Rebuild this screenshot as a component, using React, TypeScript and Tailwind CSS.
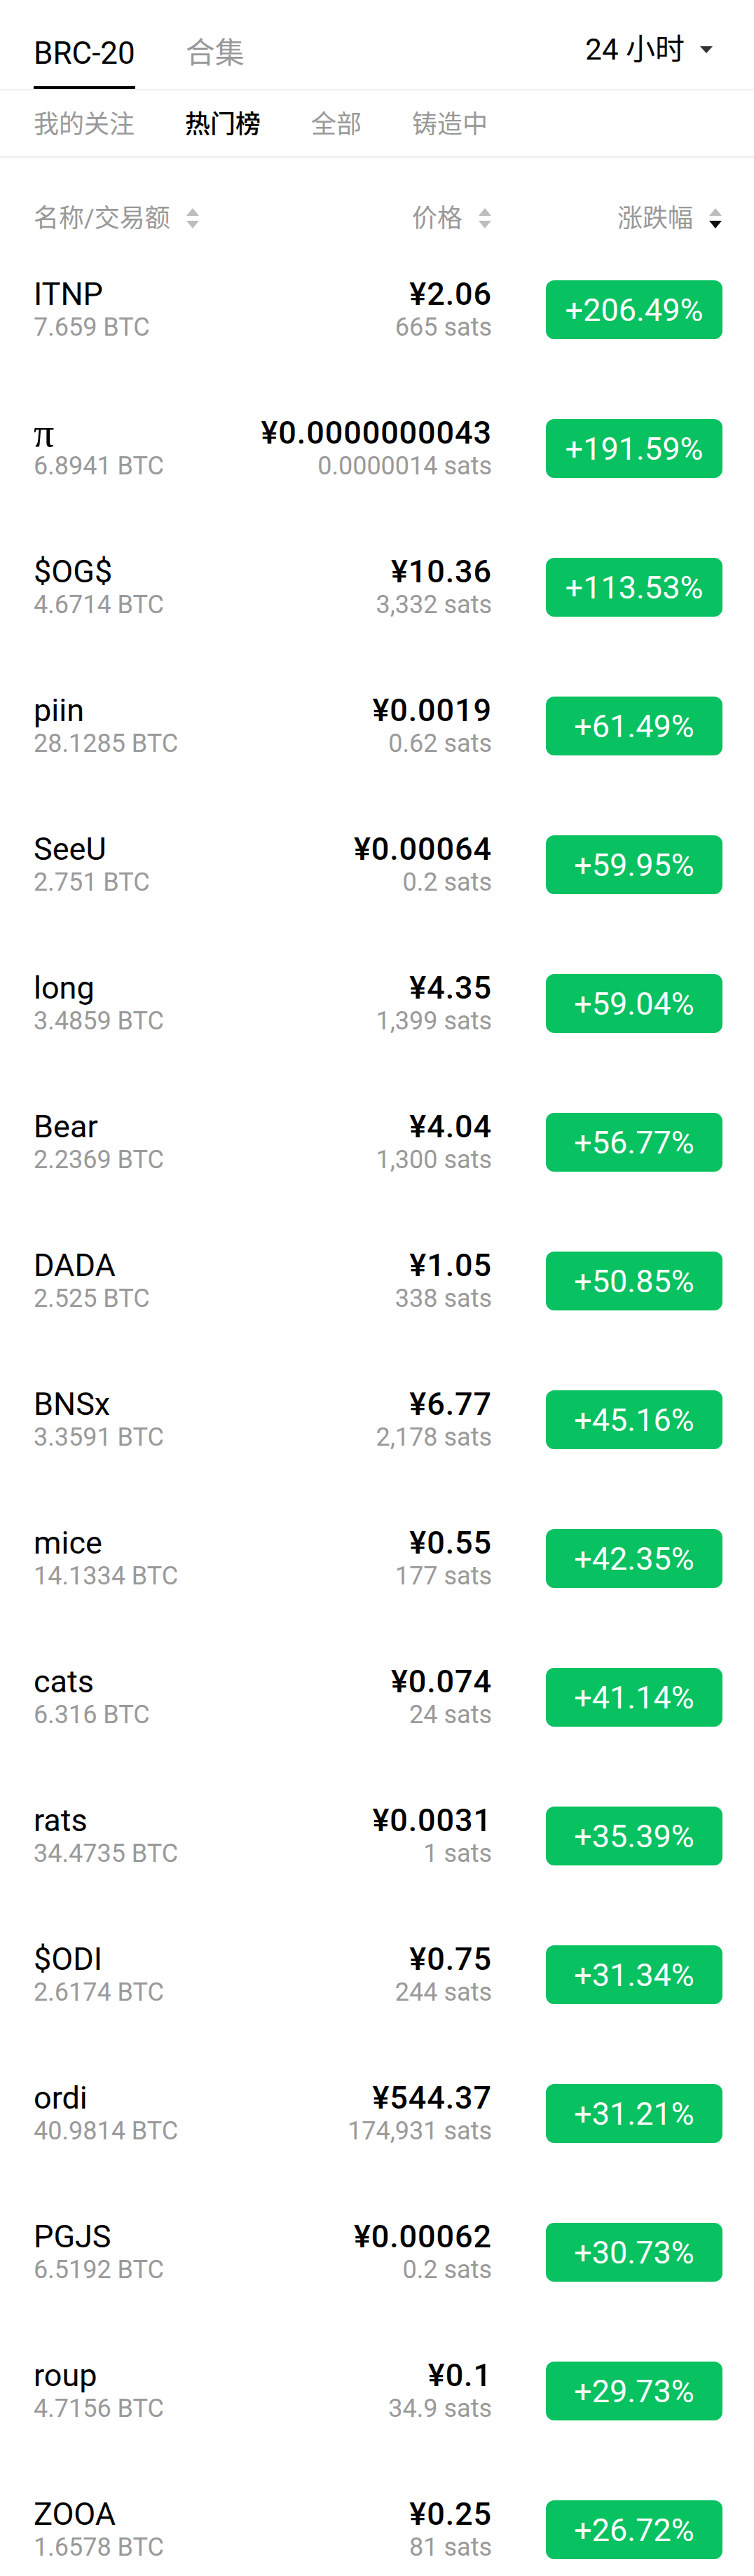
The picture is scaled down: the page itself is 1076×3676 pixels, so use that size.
import React from 'react';

type Row = { name: string; vol: string; price: string; sats: string; change: string };

const rows: Row[] = [
  { name: 'ITNP', vol: '7.659 BTC', price: '¥2.06', sats: '665 sats', change: '+206.49%' },
  { name: 'π', vol: '6.8941 BTC', price: '¥0.0000000043', sats: '0.0000014 sats', change: '+191.59%' },
  { name: '$OG$', vol: '4.6714 BTC', price: '¥10.36', sats: '3,332 sats', change: '+113.53%' },
  { name: 'piin', vol: '28.1285 BTC', price: '¥0.0019', sats: '0.62 sats', change: '+61.49%' },
  { name: 'SeeU', vol: '2.751 BTC', price: '¥0.00064', sats: '0.2 sats', change: '+59.95%' },
  { name: 'long', vol: '3.4859 BTC', price: '¥4.35', sats: '1,399 sats', change: '+59.04%' },
  { name: 'Bear', vol: '2.2369 BTC', price: '¥4.04', sats: '1,300 sats', change: '+56.77%' },
  { name: 'DADA', vol: '2.525 BTC', price: '¥1.05', sats: '338 sats', change: '+50.85%' },
  { name: 'BNSx', vol: '3.3591 BTC', price: '¥6.77', sats: '2,178 sats', change: '+45.16%' },
  { name: 'mice', vol: '14.1334 BTC', price: '¥0.55', sats: '177 sats', change: '+42.35%' },
  { name: 'cats', vol: '6.316 BTC', price: '¥0.074', sats: '24 sats', change: '+41.14%' },
  { name: 'rats', vol: '34.4735 BTC', price: '¥0.0031', sats: '1 sats', change: '+35.39%' },
  { name: '$ODI', vol: '2.6174 BTC', price: '¥0.75', sats: '244 sats', change: '+31.34%' },
  { name: 'ordi', vol: '40.9814 BTC', price: '¥544.37', sats: '174,931 sats', change: '+31.21%' },
  { name: 'PGJS', vol: '6.5192 BTC', price: '¥0.00062', sats: '0.2 sats', change: '+30.73%' },
  { name: 'roup', vol: '4.7156 BTC', price: '¥0.1', sats: '34.9 sats', change: '+29.73%' },
  { name: 'ZOOA', vol: '1.6578 BTC', price: '¥0.25', sats: '81 sats', change: '+26.72%' },
];

function SortIcon({ active = false }: { active?: boolean }) {
  return (
    <svg width="20" height="32" viewBox="0 0 20 32" className="shrink-0">
      <polygon points="10,1 19,12 1,12" fill="#bdbdbd" />
      <polygon points="1,19 19,19 10,30" fill={active ? '#111111' : '#bdbdbd'} />
    </svg>
  );
}

function CoinRow({ row }: { row: Row }) {
  return (
    <div className="flex h-[198px] items-center pl-[48px] pr-[45px]">
      <div className="flex flex-1 flex-col">
        <span
          className={
            row.name === 'π'
              ? "font-['Liberation_Serif',serif] text-[58px] leading-[50px] text-black"
              : 'text-[45px] leading-[50px] text-black'
          }
        >
          {row.name}
        </span>
        <span className="text-[36px] leading-[44px] text-[#9a9a9a]">{row.vol}</span>
      </div>
      <div className="flex flex-col items-end">
        <span className="text-[45px] font-medium leading-[50px] tracking-[0.02em] text-black">{row.price}</span>
        <span className="text-[36px] leading-[44px] text-[#9a9a9a]">{row.sats}</span>
      </div>
      <div className="ml-[77px] flex h-[84px] w-[252px] items-center justify-center rounded-[12px] bg-[#08c160] text-[45px] leading-none text-white">
        {row.change}
      </div>
    </div>
  );
}

export default function App() {
  return (
    <div className="min-h-screen w-full bg-white font-['Roboto','Noto_Sans_CJK_SC',sans-serif]">
      {/* top tabs */}
      <div className="flex h-[129px] items-stretch justify-between border-b-2 border-[#eeeeee] pl-[48px] pr-[59px]">
        <div className="flex items-stretch gap-[72px]">
          <div className="flex flex-col">
            <div className="flex flex-1 items-center pt-[29px] text-[44px] leading-none text-black">BRC-20</div>
            <div className="h-[4px] bg-black" />
          </div>
          <div className="flex flex-col">
            <div className="flex flex-1 items-center pt-[29px] text-[42px] leading-none text-[#999999]">合集</div>
            <div className="h-[4px]" />
          </div>
        </div>
        <div className="flex items-center gap-[22px] pt-[15px]">
          <span className="text-[42px] leading-none text-black">24 小时</span>
          <svg width="18" height="10" viewBox="0 0 18 10">
            <polygon points="0,0 18,0 9,10" fill="#333333" />
          </svg>
        </div>
      </div>

      {/* sub tabs */}
      <div className="flex h-[96px] items-center gap-[72px] border-b-2 border-[#eeeeee] pl-[48px] pt-[4px] text-[36px] leading-none">
        <span className="text-[#999999]">我的关注</span>
        <span className="font-medium text-black">热门榜</span>
        <span className="text-[#999999]">全部</span>
        <span className="text-[#999999]">铸造中</span>
      </div>

      {/* column headers */}
      <div className="flex h-[118px] items-end pb-[7px] pl-[48px] pr-[45px] text-[36px] leading-[48px] text-[#999999]">
        <div className="flex flex-1 items-center gap-[22px]">
          <span>名称/交易额</span>
          <SortIcon />
        </div>
        <div className="flex items-center gap-[22px]">
          <span>价格</span>
          <SortIcon />
        </div>
        <div className="ml-[77px] flex w-[252px] items-center justify-end gap-[22px]">
          <span>涨跌幅</span>
          <SortIcon active />
        </div>
      </div>

      {/* list */}
      <div className="flex flex-col">
        {rows.map((r) => (
          <CoinRow key={r.name} row={r} />
        ))}
      </div>
    </div>
  );
}
